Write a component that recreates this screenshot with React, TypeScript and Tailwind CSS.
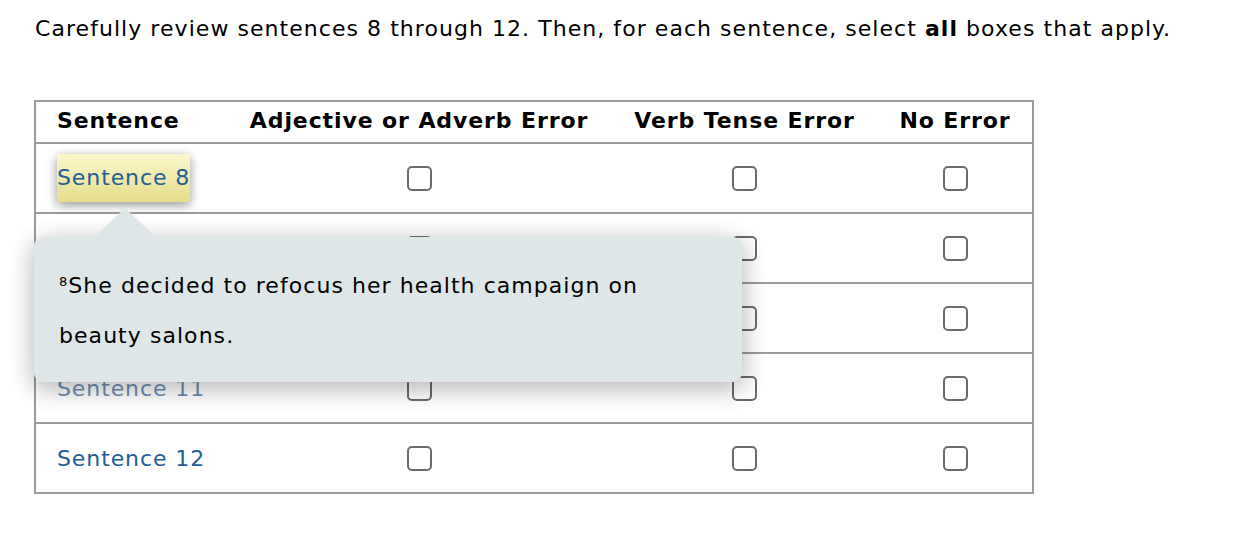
import React from "react";

const font = { fontFamily: '"DejaVu Sans", Verdana, sans-serif' };

function Box() {
  return <div className="mx-auto h-[25px] w-[25px] rounded-[5px] border-2 border-[#6b6b6b] bg-white" />;
}

const rows = ["Sentence 8", "Sentence 9", "Sentence 10", "Sentence 11", "Sentence 12"];

export default function App() {
  return (
    <div className="h-[534px] w-[1236px] bg-white text-black" style={font}>
      <div className="pl-[35px] pt-[14px] text-[22px] leading-[30px] tracking-[1.05px]">
        Carefully review sentences 8 through 12. Then, for each sentence, select <b>all</b> boxes that apply.
      </div>
      <div className="relative ml-[34px] mt-[56px] w-[998px]">
        <table className="w-[998px] table-fixed border-collapse border-2 border-[#9c9c9c]">
          <colgroup>
            <col className="w-[192px]" />
            <col className="w-[384px]" />
            <col className="w-[267px]" />
            <col className="w-[155px]" />
          </colgroup>
          <thead>
            <tr className="h-[42px] border-b-2 border-[#9c9c9c] text-[22px] font-bold tracking-[0.9px]">
              <th className="pb-[4px] pl-[21px] text-left">Sentence</th>
              <th className="pb-[4px] text-center">Adjective or Adverb Error</th>
              <th className="pb-[4px] text-center">Verb Tense Error</th>
              <th className="pb-[4px] text-center">No Error</th>
            </tr>
          </thead>
          <tbody>
            {rows.map((r, i) => (
              <tr key={r} className="h-[70px] border-b-2 border-[#9c9c9c]">
                <td className="pl-[21px] text-[22px] tracking-[0.9px]">
                  {i === 0 ? (
                    <span className="inline-block bg-gradient-to-b from-[#fbf8cc] to-[#e6dc8a] py-[10px] text-[#225d97] leading-[28px] shadow-[0_3px_10px_rgba(0,0,0,0.42)]">
                      {r}
                    </span>
                  ) : (
                    <span className={i === 3 ? "text-[#6b8fb4]" : "text-[#225d97]"}>{r}</span>
                  )}
                </td>
                <td><Box /></td>
                <td><Box /></td>
                <td><Box /></td>
              </tr>
            ))}
          </tbody>
        </table>
        <div className="absolute left-0 top-[137px] h-[145px] w-[708px] rounded-[9px] bg-[#dfe6e8] px-[25px] py-[25px] text-[22px] leading-[47px] tracking-[1.05px] shadow-[0_6px_26px_rgba(0,0,0,0.32)]">
          <svg className="absolute left-[59px] top-[-29px]" width="64" height="30" viewBox="0 0 64 30">
            <polygon points="0,30 32,0 64,30" fill="#dfe6e8" />
          </svg>
          <span className="relative top-[-7px] text-[13px]">8</span>She decided to refocus her health campaign on
          <br />
          beauty salons.
        </div>
      </div>
    </div>
  );
}
